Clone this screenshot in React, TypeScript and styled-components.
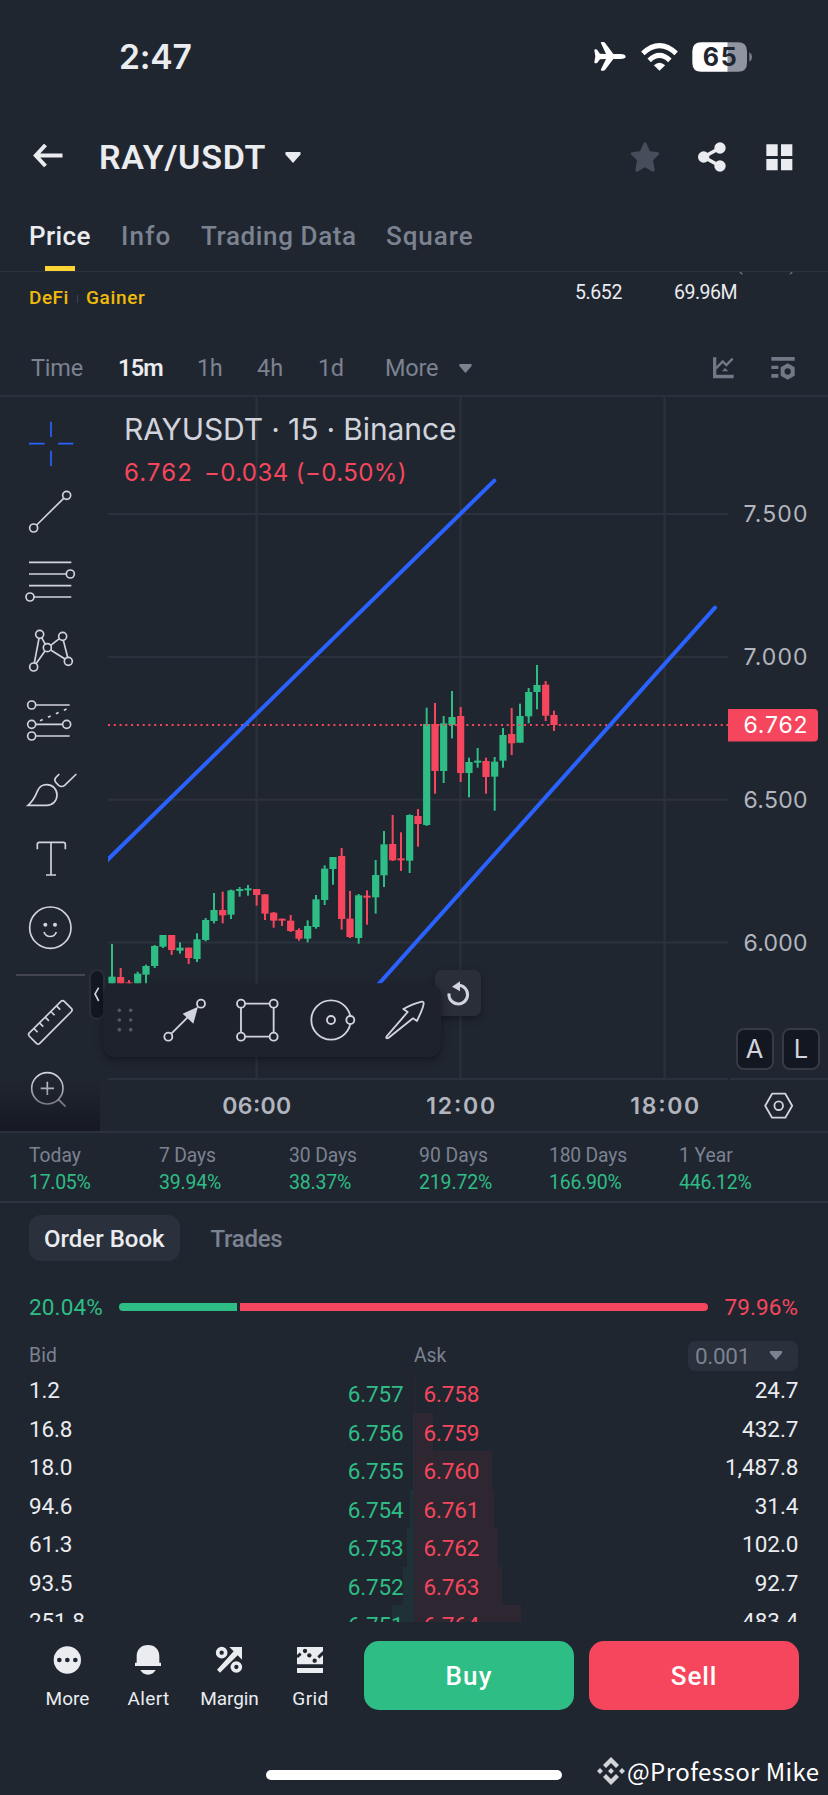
import React from "react";
import styled, { createGlobalStyle, css } from "styled-components";

const c = {
  bg: "#202630",
  line: "#2b313c",
  panel: "#2a303c",
  text: "#eaecef",
  muted: "#7b8290",
  green: "#2ebd85",
  red: "#f6465d",
  yellow: "#f0b90b",
  blue: "#2962ff",
  icon: "#d1d4dc",
  axis: "#b2b5be",
  deep: "#131722",
};

const GlobalStyle = createGlobalStyle`
  * { box-sizing: border-box; }
  body { margin: 0; background: ${c.bg}; }
`;

const Screen = styled.div`
  width: 828px;
  height: 1795px;
  overflow: hidden;
  position: relative;
  display: flex;
  flex-direction: column;
  background: ${c.bg};
  color: ${c.text};
  font-family: Roboto, sans-serif;
`;

/* Text run with its size, weight, tracking and tone */
const Txt = styled.span<{ $s: number; $w?: number; $ls?: number; $c?: string; $inter?: boolean }>`
  font-size: ${(p) => p.$s}px;
  font-weight: ${(p) => p.$w ?? 400};
  letter-spacing: ${(p) => p.$ls ?? 0}px;
  color: ${(p) => p.$c ?? c.text};
  line-height: 30px;
  white-space: pre;
  ${(p) => p.$inter && css`font-family: Inter, sans-serif;`}
`;

const StatusBar = styled.div`
  flex: none;
  height: 113px;
  padding: 0 75px 0 119px;
  display: flex;
  align-items: center;
  justify-content: space-between;
`;

const StatusIcons = styled.div`
  display: flex;
  align-items: center;
  gap: 14.5px;
`;

const Header = styled.div`
  flex: none;
  height: 88px;
  padding: 0 35px 0 32px;
  display: flex;
  align-items: center;
`;

const PairTitle = styled.div`
  display: flex;
  align-items: center;
  gap: 18.5px;
  margin-left: 35px;
`;

const HeaderActions = styled.div`
  margin-left: auto;
  display: flex;
  align-items: center;
  gap: 38px;
`;

const MainTabs = styled.div`
  flex: none;
  height: 71px;
  padding-left: 29px;
  display: flex;
  gap: 30px;
  border-bottom: 1px solid ${c.line};
`;

const MainTab = styled.div<{ $w: number }>`
  position: relative;
  width: ${(p) => p.$w}px;
  padding-top: 20px;
`;

const TabMark = styled.i`
  position: absolute;
  left: 16px;
  bottom: 0;
  width: 30px;
  height: 5px;
  background: #fcd535;
`;

const TickerStrip = styled.div`
  flex: none;
  height: 69px;
  overflow: hidden;
  display: flex;
  justify-content: space-between;
  padding: 0 33px 0 29px;
`;

const TagList = styled.div`
  display: flex;
  align-items: center;
  height: 30px;
  margin-top: 11px;
`;

const TagDivider = styled.i`
  width: 1px;
  height: 8px;
  margin: 2px 8px 0 8px;
  background: #3a414d;
`;

const VolumeCols = styled.div`
  display: flex;
  gap: 53px;
`;

const VolumeCol = styled.div<{ $w: number }>`
  display: flex;
  flex-direction: column;
  width: ${(p) => p.$w}px;
  margin-top: -22px;
  & > span:first-child { height: 28px; }
`;

const Timeframes = styled.div`
  flex: none;
  height: 56px;
  padding: 0 33px 0 31px;
  display: flex;
  align-items: center;
  border-bottom: 2px solid ${c.line};
`;

const Frame = styled.div<{ $w: number }>`
  width: ${(p) => p.$w}px;
`;

const FrameIcons = styled.div`
  margin-left: auto;
  display: flex;
  gap: 37px;
`;

const ChartArea = styled.div`
  flex: none;
  height: 736px;
  position: relative;
  display: flex;
  border-bottom: 2px solid ${c.line};
`;

const Rail = styled.div`
  flex: none;
  width: 100px;
  padding-top: 11.67px;
  position: relative;
  display: flex;
  flex-direction: column;
`;

const RailIcon = styled.svg`
  flex: none;
  width: 100px;
  height: 69.33px;
  fill: none;
  stroke: ${c.icon};
  stroke-width: 5;
`;

const RailLine = styled.i`
  flex: none;
  width: 69px;
  height: 2px;
  margin: 10.7px 0 11.6px 16px;
  background: #434651;
`;

const RailFade = styled.i`
  position: absolute;
  left: 0;
  right: 0;
  bottom: 0;
  height: 54px;
  background: linear-gradient(to bottom, rgba(19, 23, 34, 0), rgba(21, 24, 35, 0.95));
`;

const Canvas = styled.svg`
  flex: none;
  width: 728px;
  height: 734px;
  display: block;
  font-family: Inter, sans-serif;
`;

const Legend = styled.div`
  position: absolute;
  left: 124px;
  top: 17px;
  display: flex;
  flex-direction: column;
  gap: 12.5px;
`;

const LegendRow = styled.div`
  display: flex;
  gap: 11px;
  height: 31px;
`;

const CollapseTab = styled.div`
  position: absolute;
  left: 89px;
  top: 571.5px;
  width: 16px;
  height: 51px;
  border-radius: 8px;
  border: 2px solid #2a2e39;
  background: ${c.deep};
`;

const ResetButton = styled.div`
  position: absolute;
  left: 435px;
  top: 573px;
  width: 46px;
  height: 46px;
  border-radius: 7px;
  background: #2a2e39;
  box-shadow: 0 3px 7px rgba(0, 0, 0, 0.35);
`;

const FloatBar = styled.div`
  position: absolute;
  left: 103px;
  top: 586.5px;
  width: 338px;
  height: 73px;
  display: flex;
  border-radius: 12px;
  background: #1e222d;
  box-shadow: 0 3px 8px rgba(0, 0, 0, 0.4);
`;

const FloatIcon = styled.svg<{ $w?: number }>`
  flex: none;
  width: ${(p) => p.$w ?? 73.33}px;
  height: 73px;
  fill: none;
  stroke: ${c.icon};
  stroke-width: 5.5;
`;

const AxisKeys = styled.div`
  position: absolute;
  left: 735.5px;
  top: 630.5px;
  display: flex;
  gap: 8.5px;
`;

const AxisKey = styled.div`
  width: 38px;
  height: 42px;
  display: flex;
  align-items: center;
  justify-content: center;
  border: 2px solid #363a45;
  border-radius: 8px;
  background: ${c.deep};
`;

const Stats = styled.div`
  flex: none;
  height: 70px;
  padding: 8px 0 0 29px;
  display: grid;
  grid-template-columns: repeat(6, 130px);
  border-bottom: 2px solid #2e343f;
`;

const Stat = styled.div`
  display: flex;
  flex-direction: column;
  & > span { height: 26.6px; }
`;

const BookTabs = styled.div`
  flex: none;
  margin-top: 12px;
  padding-left: 29px;
  height: 46px;
  display: flex;
  align-items: center;
`;

const BookTab = styled.div<{ $on?: boolean }>`
  height: 46px;
  padding: 9px 15px 7px;
  margin-right: 16px;
  border-radius: 12px;
  background: ${(p) => (p.$on ? c.panel : "transparent")};
`;

const RatioRow = styled.div`
  flex: none;
  margin-top: 31px;
  height: 30px;
  padding: 0 30px 0 29px;
  display: flex;
  align-items: center;
`;

const RatioBar = styled.div`
  flex: none;
  width: 589px;
  margin: 0 16px 0 0;
  display: flex;
  gap: 3px;
`;

const RatioPart = styled.i<{ $share: number; $buy?: boolean }>`
  flex: ${(p) => p.$share} 0 0;
  height: 8px;
  background: ${(p) => (p.$buy ? c.green : c.red)};
  border-radius: ${(p) => (p.$buy ? "4px 0 0 4px" : "0 4px 4px 0")};
`;

const RatioLabel = styled.div<{ $w: number }>`
  width: ${(p) => p.$w}px;
`;

const BookHead = styled.div`
  flex: none;
  margin-top: 18px;
  height: 30px;
  padding: 0 30px 0 29px;
  display: grid;
  grid-template-columns: 385px 1fr 110px;
  align-items: center;
  & > span { padding-top: 1px; }
`;

const Precision = styled.div`
  height: 30px;
  padding: 0 15px 0 7px;
  display: flex;
  align-items: center;
  justify-content: space-between;
  border-radius: 7px;
  background: ${c.panel};
`;

const Book = styled.div`
  flex: none;
  margin-top: 4px;
  height: 248px;
  overflow: hidden;
`;

const BookRow = styled.div`
  height: 38.5px;
  display: grid;
  grid-template-columns: 414px 414px;
`;

const BookSide = styled.div<{ $ask?: boolean; $depth: number }>`
  display: flex;
  justify-content: space-between;
  padding: ${(p) => (p.$ask ? "0 29.5px 0 9.5px" : "0 10.5px 0 29px")};
  background: linear-gradient(${(p) => (p.$ask ? "#2e2731, #2e2731" : "#203037, #203037")}) no-repeat
    ${(p) => (p.$ask ? "left" : "right")} top / ${(p) => p.$depth}px 100%;
  & > span { padding-top: ${(p) => (p.$ask ? "5px" : "1px")}; }
  & > span + span { padding-top: ${(p) => (p.$ask ? "1px" : "5px")}; }
`;

const Footer = styled.div`
  flex: none;
  margin-top: 19px;
  height: 69px;
  padding: 0 29px 0 27px;
  display: flex;
`;

const NavItem = styled.div`
  width: 81px;
  display: flex;
  flex-direction: column;
  align-items: center;
  padding-top: 4px;
  gap: 9px;
`;

const NavIcon = styled.svg`
  flex: none;
  width: 30px;
  height: 30px;
  margin-right: 1.5px;
  fill: ${c.text};
`;

const TradeButton = styled.div<{ $sell?: boolean }>`
  width: 210px;
  height: 69px;
  margin-left: ${(p) => (p.$sell ? 15 : 13)}px;
  display: flex;
  align-items: center;
  justify-content: center;
  border-radius: 15px;
  background: ${(p) => (p.$sell ? c.red : c.green)};
`;

const BottomRow = styled.div`
  flex: none;
  height: 30px;
  margin-top: 46px;
  padding-left: 266px;
  display: flex;
  align-items: center;
`;

const HomeBar = styled.i`
  width: 296px;
  height: 10px;
  margin: 7px 35px 0 0;
  border-radius: 5px;
  background: #fff;
`;

const Credit = styled.span`
  font: 400 24px/30px "Noto Sans CJK SC", sans-serif;
  letter-spacing: 0.42px;
  color: #fff;
  white-space: pre;
  margin: -1px 0 0 2px;
`;

/* Candles: direction, high, body top, body bottom, low (thirds of a pixel below y = 780) */
type Candle = [0 | 1, number, number, number, number];
const candles: Candle[] = [
  [1, 492, 590, 640, 640], [0, 564, 591, 640, 640], [0, 600, 607, 640, 640], [1, 575, 581, 640, 640],
  [1, 554, 558, 584, 640], [1, 495, 498, 558, 564], [1, 465, 465, 500, 504], [0, 465, 465, 510, 525],
  [1, 487, 503, 512, 521], [0, 503, 503, 534, 552], [1, 460, 478, 537, 546], [1, 414, 420, 480, 484],
  [1, 339, 390, 423, 430], [0, 335, 390, 406, 430], [1, 329, 331, 404, 417], [1, 321, 327, 333, 350],
  [1, 315, 325, 331, 347], [0, 327, 327, 345, 377], [0, 343, 343, 401, 420], [0, 396, 398, 422, 443],
  [0, 416, 416, 422, 438], [0, 405, 422, 453, 456], [0, 445, 450, 476, 482], [1, 421, 438, 476, 487],
  [1, 345, 358, 441, 446], [1, 256, 266, 360, 375], [1, 231, 231, 267, 314], [0, 204, 228, 417, 449],
  [0, 333, 416, 471, 474], [1, 342, 346, 474, 491], [0, 331, 347, 353, 434], [1, 240, 285, 352, 401],
  [1, 153, 193, 286, 321], [0, 105, 192, 241, 243], [0, 157, 235, 241, 273], [1, 103, 105, 242, 279],
  [0, 87, 108, 132, 200], [1, -217, -168, 135, 138], [0, -231, -168, -27, 41], [1, -192, -170, -27, 9],
  [1, -267, -189, -165, -125], [0, -219, -192, -21, 6], [1, -67, -54, -21, 52], [1, -96, -58, -52, -37],
  [0, -67, -57, -9, 41], [1, -69, -55, -10, 92], [1, -156, -135, -58, -37], [0, -216, -138, -110, -75],
  [1, -229, -192, -112, -112], [1, -276, -264, -191, -170], [1, -345, -285, -264, -212],
  [0, -297, -286, -193, -177], [0, -208, -195, -165, -147],
];

const gridX = [256.5, 460.5, 664.5];
const timeLabels = ["06:00", "12:00", "18:00"];
const gridY: [number, string][] = [[514, "7.500"], [657, "7.000"], [799.7, "6.500"], [942.6, "6.000"]];

const yOf = (v: number) => 780 + v / 3;

function PriceChart() {
  return (
    <Canvas viewBox="100 397 728 734">
      <defs>
        <clipPath id="pane"><rect x="108" y="397" width="620" height="586.3" /></clipPath>
      </defs>
      <g stroke="#2c323d" strokeWidth="2">
        {gridX.map((x) => <line key={x} x1={x} x2={x} y1="397" y2="1078" />)}
        {gridY.map(([y]) => <line key={y} x1="108" x2="728" y1={y} y2={y} />)}
        <line x1="108" x2="728" y1="1079" y2="1079" />
        <line x1="730" x2="828" y1="1079" y2="1079" />
      </g>
      <g clipPath="url(#pane)">
        {candles.map(([up, hi, top, bottom, lo], i) => {
          const x = 112 + Math.round(i * 8.5 * 3) / 3;
          return (
            <g key={i} fill={up ? c.green : c.red}>
              <rect x={x - 1} width="2" y={yOf(hi)} height={(lo - hi) / 3} />
              <rect x={x - 3.6} width="7.2" y={yOf(top)} height={(bottom - top) / 3} />
            </g>
          );
        })}
        <line x1="108" x2="728" y1="725" y2="725" stroke={c.red} strokeWidth="2" strokeDasharray="2 3.78" />
        <g stroke={c.blue} strokeWidth="4" strokeLinecap="round">
          <line x1="105" y1="862.3" x2="494.3" y2="480.6" />
          <line x1="374.5" y1="988.7" x2="715" y2="607.6" />
        </g>
      </g>
      <g fill={c.axis} fontSize="23">
        {gridY.map(([y, label]) => (
          <text key={label} x="743.5" y={y + 8.3} textLength="64" lengthAdjust="spacing">{label}</text>
        ))}
        {gridX.map((x, i) => (
          <text key={x} x={x + 0.3} y="1114.3" fontWeight="600" textAnchor="middle" textLength="69">{timeLabels[i]}</text>
        ))}
      </g>
      <path d="M728 709h86a4 4 0 0 1 4 4v24.500a4 4 0 0 1-4 4h-86z" fill={c.red} />
      <text x="743.5" y="733.3" fontSize="23" fill="#fff" textLength="64">6.762</text>
      <g fill="none" stroke={c.icon} strokeWidth="1.8" strokeLinejoin="round">
        <path d="M765.200 1105.700l6.900-12h13.200l6.900 12-6.900 12h-13.200z" />
        <circle cx="778.7" cy="1105.700" r="4.300" />
      </g>
    </Canvas>
  );
}

const Dot = ({ x, y }: { x: number; y: number }) => <circle cx={x} cy={y} r="12" />;

function ToolRail() {
  const vb = "0 0 300 208";
  return (
    <Rail>
      <RailIcon viewBox={vb}>
        <path stroke={c.blue} d="M87 104h47M174 104h46M153 38v46M153 125v46" />
      </RailIcon>
      <RailIcon viewBox={vb}>
        <Dot x={200} y={52} /><Dot x={101} y={150} />
        <path d="M110 141L191 61" />
      </RailIcon>
      <RailIcon viewBox={vb}>
        <path d="M87 46h127M87 81h112M87 116h127M102 150h112" />
        <Dot x={211} y={81} /><Dot x={90} y={150} />
      </RailIcon>
      <RailIcon viewBox={vb}>
        <path d="M117 64L103 138M125 62L136 82M135 102L108 140M152 85L178 65M190 70L203 121M152 99L195 126" />
        <Dot x={119} y={52} /><Dot x={188} y={58} /><Dot x={142} y={92} /><Dot x={205} y={133} /><Dot x={101} y={150} />
      </RailIcon>
      <RailIcon viewBox={vb}>
        <path d="M107 57h102M107 115h81M107 150h102" />
        <path d="M120 104L200 69" strokeDasharray="9 17" />
        <Dot x={95} y={57} /><Dot x={95} y={115} /><Dot x={200} y={115} /><Dot x={95} y={150} />
      </RailIcon>
      <RailIcon viewBox={vb}>
        <path d="M84 151C100 138 107 122 113 107C118 95 128 89 140 89C158 89 171 103 171 120C171 138 158 151 140 151Z" />
        <path d="M178 57L170 65Q160 74 168 83L176 91Q185 98 194 91L229 57" />
      </RailIcon>
      <RailIcon viewBox={vb}>
        <path d="M112 73V58Q112 52 118 52H190Q196 52 196 58V73M153 52V150M138 150h30" />
      </RailIcon>
      <RailIcon viewBox={vb}>
        <circle cx="151" cy="101" r="62" />
        <g fill={c.icon} stroke="none"><circle cx="136" cy="92" r="6" /><circle cx="165" cy="92" r="6" /></g>
        <path d="M132 114C138 132 163 132 169 114" />
      </RailIcon>
      <RailLine />
      <RailIcon viewBox={vb}>
        <g transform="translate(151 103) rotate(-45)">
          <rect x="-74" y="-22" width="148" height="44" rx="7" />
          <path d="M-48-22v16M-24-22v16M0-22v16M24-22v16M48-22v16" />
        </g>
      </RailIcon>
      <RailIcon viewBox={vb}>
        <circle cx="142" cy="94" r="47" />
        <path d="M122 94h40M142 74v40M175 127L197 149" />
      </RailIcon>
      <RailFade />
    </Rail>
  );
}

function ShapeBar() {
  const vb = "0 0 220 219";
  return (
    <FloatBar>
      <FloatIcon $w={45} viewBox="0 0 135 219">
        <g fill="#555862" stroke="none">
          {[79, 108, 137].map((y) => [49, 83].map((x) => <circle key={`${x}-${y}`} cx={x} cy={y} r="5.500" />))}
        </g>
      </FloatIcon>
      <FloatIcon viewBox={vb}>
        <Dot x={159} y={59} /><Dot x={61} y={158} />
        <path d="M70 149L124 95" />
        <path d="M150 68L104 89L136 119Z" fill={c.icon} stroke="none" />
      </FloatIcon>
      <FloatIcon viewBox={vb}>
        <path d="M72 59h74M72 158h74M60 71v75M158 71v75" />
        <Dot x={60} y={59} /><Dot x={158} y={59} /><Dot x={60} y={158} /><Dot x={158} y={158} />
      </FloatIcon>
      <FloatIcon viewBox={vb}>
        <circle cx="108" cy="108" r="59" />
        <circle cx="166" cy="108" r="12" fill="#1e222d" />
        <Dot x={108} y={108} />
      </FloatIcon>
      <FloatIcon viewBox={vb} strokeLinejoin="round">
        <path d="M161 53C140 58 123 66 106 75L119 84L56 157Q52 165 61 162L135 103L147 111C154 94 167 72 167 58Q167 52 161 53Z" />
      </FloatIcon>
    </FloatBar>
  );
}

const Caret = ({ w, h, fill }: { w: number; h: number; fill: string }) => (
  <svg width={w} height={h} viewBox="0 0 16 11">
    <path d="M0.500 0H15.500V2.500L8 11L0.500 2.500Z" fill={fill} />
  </svg>
);

const bids: [string, string, number][] = [
  ["1.2", "6.757", 0], ["16.8", "6.756", 1], ["18.0", "6.755", 1], ["94.6", "6.754", 4],
  ["61.3", "6.753", 7], ["93.5", "6.752", 11], ["251.8", "6.751", 22],
];
const asks: [string, string, number][] = [
  ["6.758", "24.7", 1], ["6.759", "432.7", 19], ["6.760", "1,487.8", 78], ["6.761", "31.4", 80],
  ["6.762", "102.0", 84], ["6.763", "92.7", 88], ["6.764", "483.4", 107],
];
/* Period, its tracking, return, its tracking */
const stats: [string, number, string, number][] = [
  ["Today", 0, "17.05%", -0.3], ["7 Days", -0.15, "39.94%", -0.2], ["30 Days", -0.1, "38.37%", -0.2],
  ["90 Days", 0.05, "219.72%", -0.15], ["180 Days", -0.17, "166.90%", -0.25], ["1 Year", 0, "446.12%", -0.25],
];

export default function App() {
  return (
    <Screen>
      <GlobalStyle />
      <StatusBar>
        <Txt $s={33.7} $w={600} $ls={-0.25} $inter>2:47</Txt>
        <StatusIcons>
          <svg width="32" height="29" viewBox="0 0 96 87" fill="#fff">
            <path d="M1 25Q1 22 4 22H6Q8 22 10 24L18 35L36 36L21 4Q19 0 23 0H28Q31 0 33 2L58 36H80Q94 37 95 44Q94 50 80 51H58L33 84Q31 86 28 86H23Q19 86 21 82L36 51L18 52L10 62Q8 64 6 64H4Q1 64 1 61L4 43Z" />
          </svg>
          <svg width="37" height="28" viewBox="0 0 110 84">
            <g fill="none" stroke="#fff" strokeWidth="15">
              <path d="M5 31Q55 -15 105 31" />
              <path d="M24 52Q55 22 86 52" />
            </g>
            <path d="M38 67Q55 52 72 67L55 83Z" fill="#fff" />
          </svg>
          <svg width="61" height="30" viewBox="0 0 183 90" fontFamily="Inter, sans-serif">
            <path d="M107 1H138Q165 1 165 28V62Q165 89 138 89H107Z" fill="#9094a0" />
            <path d="M107 1H28Q1 1 1 28V62Q1 89 28 89H107Z" fill="#fff" />
            <path d="M172 31Q180 35 180 45Q180 55 172 59Z" fill="#7b808b" />
            <text x="83" y="72" textAnchor="middle" fontSize="75" fontWeight="700" textLength="102" fill={c.bg}>65</text>
          </svg>
        </StatusIcons>
      </StatusBar>

      <Header>
        <svg width="32" height="26" viewBox="0 0 32 26" fill="none" stroke={c.text} strokeWidth="4">
          <path d="M4 11.500H30.500M13.500 1L3.800 11.500L13.500 22" />
        </svg>
        <PairTitle>
          <Txt $s={34} $w={600} $ls={0.75}>RAY/USDT</Txt>
          <Caret w={16} h={11} fill={c.text} />
        </PairTitle>
        <HeaderActions>
          <svg width="30" height="30" viewBox="0 0 90 90" fill="#474d5b">
            <path d="M41 4Q45-2 49 4L60 28L84 31Q91 33 86 38L69 55L74 84Q74 91 68 89L45 76L22 89Q16 91 16 84L21 55L4 38Q-1 33 6 31L30 28Z" />
          </svg>
          <svg width="30" height="30" viewBox="0 0 90 90" fill={c.text}>
            <circle cx="66" cy="18" r="17" /><circle cx="17" cy="45" r="17" /><circle cx="66" cy="72" r="17" />
            <path d="M66 18L17 45L66 72" fill="none" stroke={c.text} strokeWidth="11" />
          </svg>
          <svg width="27" height="27" viewBox="0 0 81 81" fill={c.text}>
            <path d="M1 1h34v35H1zM45 1h34v35H45zM1 45h34v34H1zM45 45h34v34H45z" />
          </svg>
        </HeaderActions>
      </Header>

      <MainTabs>
        <MainTab $w={62}><Txt $s={26} $w={500} $ls={0.4}>Price</Txt><TabMark /></MainTab>
        <MainTab $w={50}><Txt $s={26} $w={500} $ls={1.2} $c={c.muted}>Info</Txt></MainTab>
        <MainTab $w={155}><Txt $s={26} $w={500} $ls={0.62} $c={c.muted}>Trading Data</Txt></MainTab>
        <MainTab $w={90}><Txt $s={26} $w={500} $ls={0.95} $c={c.muted}>Square</Txt></MainTab>
      </MainTabs>

      <TickerStrip>
        <TagList>
          <Txt $s={19} $w={500} $ls={0.5} $c={c.yellow}>DeFi</Txt>
          <TagDivider />
          <Txt $s={19} $w={500} $ls={0.68} $c={c.yellow}>Gainer</Txt>
        </TagList>
        <VolumeCols>
          <VolumeCol $w={46}>
            <Txt $s={17} $c={c.muted}> </Txt>
            <Txt $s={19.500} $ls={-0.4}>5.652</Txt>
          </VolumeCol>
          <VolumeCol $w={121}>
            <Txt $s={17} $ls={0.85} $c={c.muted}>24h Vol(USDT)</Txt>
            <Txt $s={19.500} $ls={-0.5}>69.96M</Txt>
          </VolumeCol>
        </VolumeCols>
      </TickerStrip>

      <Timeframes>
        <Frame $w={87}><Txt $s={23.500} $ls={-0.2} $c={c.muted}>Time</Txt></Frame>
        <Frame $w={79}><Txt $s={23.500} $w={600} $ls={-0.8}>15m</Txt></Frame>
        <Frame $w={60}><Txt $s={23.500} $ls={-0.5} $c={c.muted}>1h</Txt></Frame>
        <Frame $w={61}><Txt $s={23.500} $c={c.muted}>4h</Txt></Frame>
        <Frame $w={67}><Txt $s={23.500} $ls={-0.5} $c={c.muted}>1d</Txt></Frame>
        <Frame $w={74}><Txt $s={23.500} $ls={-0.25} $c={c.muted}>More</Txt></Frame>
        <Caret w={13} h={9} fill={c.muted} />
        <FrameIcons>
          <svg width="21" height="23" viewBox="0 0 63 69" fill="#717987">
            <path d="M0 1H10V53H62V64H0Z" />
            <path d="M9 34L29 13L40 24L59 5" fill="none" stroke="#717987" strokeWidth="7" />
            <path d="M27 43L36 33L46 43Z" />
          </svg>
          <svg width="24" height="23" viewBox="0 0 72 69" fill="#717987">
            <path d="M1 0H71V11H1zM1 26H22V36H1zM1 51H22V62H1z" />
            <path fillRule="evenodd" d="M50 19L71 31V56L50 68L29 56V31ZM50 34A9.500 9.500 0 1 0 50 53A9.500 9.500 0 1 0 50 34Z" />
          </svg>
        </FrameIcons>
      </Timeframes>

      <ChartArea>
        <ToolRail />
        <PriceChart />
        <Legend>
          <LegendRow><Txt $s={30} $inter $ls={-0.13} $c={c.icon}>RAYUSDT · 15 · Binance</Txt></LegendRow>
          <LegendRow>
            <Txt $s={24} $inter $ls={1.1} $c={c.red}>6.762</Txt>
            <Txt $s={24} $inter $ls={0.42} $c={c.red}>−0.034 (−0.50%)</Txt>
          </LegendRow>
        </Legend>
        <CollapseTab>
          <svg width="12" height="46" viewBox="0 0 36 138" fill="none" stroke={c.icon} strokeWidth="5">
            <path d="M23 50L12 69L23 90" />
          </svg>
        </CollapseTab>
        <ResetButton>
          <svg width="46" height="46" viewBox="0 0 138 138">
            <path d="M42 70A28 28 0 1 0 73 46" fill="none" stroke={c.icon} strokeWidth="9" />
            <path d="M51 50L75 34V64Z" fill={c.icon} />
          </svg>
        </ResetButton>
        <ShapeBar />
        <AxisKeys>
          <AxisKey><Txt $s={25.500} $inter $c={c.icon}>A</Txt></AxisKey>
          <AxisKey><Txt $s={25.500} $inter $c={c.icon}>L</Txt></AxisKey>
        </AxisKeys>
      </ChartArea>

      <Stats>
        {stats.map(([label, labelLs, value, valueLs]) => (
          <Stat key={label}>
            <Txt $s={19.300} $ls={labelLs} $c={c.muted}>{label}</Txt>
            <Txt $s={19.500} $ls={valueLs} $c={c.green}>{value}</Txt>
          </Stat>
        ))}
      </Stats>

      <BookTabs>
        <BookTab $on><Txt $s={24} $w={500}>Order Book</Txt></BookTab>
        <BookTab><Txt $s={24} $w={500} $ls={-0.3} $c={c.muted}>Trades</Txt></BookTab>
      </BookTabs>

      <RatioRow>
        <RatioLabel $w={90.5}><Txt $s={22.500} $ls={0.15} $c={c.green}>20.04%</Txt></RatioLabel>
        <RatioBar><RatioPart $buy $share={20.04} /><RatioPart $share={79.960} /></RatioBar>
        <Txt $s={22.500} $ls={0.1} $c={c.red}>79.96%</Txt>
      </RatioRow>

      <BookHead>
        <Txt $s={19.300} $ls={0.2} $c={c.muted}>Bid</Txt>
        <Txt $s={19.300} $c={c.muted}>Ask</Txt>
        <Precision>
          <Txt $s={22.500} $ls={-0.3} $c={c.muted}>0.001</Txt>
          <Caret w={14} h={9} fill={c.muted} />
        </Precision>
      </BookHead>

      <Book>
        {bids.map(([amount, price, depth], i) => (
          <BookRow key={price}>
            <BookSide $depth={depth}>
              <Txt $s={22.500} $ls={-0.15}>{amount}</Txt>
              <Txt $s={22.500} $ls={-0.15} $c={c.green}>{price}</Txt>
            </BookSide>
            <BookSide $ask $depth={asks[i][2]}>
              <Txt $s={22.500} $ls={-0.15} $c={c.red}>{asks[i][0]}</Txt>
              <Txt $s={22.500}>{asks[i][1]}</Txt>
            </BookSide>
          </BookRow>
        ))}
      </Book>

      <Footer>
        <NavItem>
          <NavIcon viewBox="0 0 90 90">
            <circle cx="46" cy="45" r="41" />
            <g fill={c.bg}><circle cx="22" cy="45" r="7" /><circle cx="46" cy="45" r="7" /><circle cx="70" cy="45" r="7" /></g>
          </NavIcon>
          <Txt $s={19}>More</Txt>
        </NavItem>
        <NavItem>
          <NavIcon viewBox="0 0 90 90">
            <path d="M6 63V53H11V34C11 14 24 0 45 0S79 14 79 34V53H84V63ZM22 75H68Q60 89 45 89T22 75Z" />
          </NavIcon>
          <Txt $s={19} $ls={0.4}>Alert</Txt>
        </NavItem>
        <NavItem>
          <NavIcon viewBox="0 0 90 90">
            <path d="M46 6H84V44L71 31L18 83L9 74L59 19Z" />
            <g fill="none" stroke={c.text} strokeWidth="11"><circle cx="23" cy="23" r="12" /><circle cx="67" cy="66" r="12" /></g>
          </NavIcon>
          <Txt $s={19} $ls={-0.08}>Margin</Txt>
        </NavItem>
        <NavItem>
          <NavIcon viewBox="0 0 90 90">
            <path d="M6 6H84V58H6ZM6 69H84V84H6Z" />
            <path d="M6 36L17 26" stroke={c.bg} strokeWidth="9" />
            <path d="M70 37L86 22" stroke={c.bg} strokeWidth="9" />
            <g fill={c.bg}><circle cx="30" cy="18" r="6.500" /><circle cx="43" cy="31" r="6.500" /><circle cx="59" cy="47" r="6.500" /></g>
          </NavIcon>
          <Txt $s={19} $ls={0.4}>Grid</Txt>
        </NavItem>
        <TradeButton><Txt $s={26} $w={500} $ls={1.2} $c="#fff">Buy</Txt></TradeButton>
        <TradeButton $sell><Txt $s={26} $w={500} $ls={0.9} $c="#fff">Sell</Txt></TradeButton>
      </Footer>

      <BottomRow>
        <HomeBar />
        <svg width="28" height="28" viewBox="0 0 84 84" fill="#d3d5d8">
          <path d="M42 0L66 24L57 33L42 18L27 33L18 24ZM42 84L66 60L57 51L42 66L27 51L18 60ZM9 33L18 42L9 51L0 42ZM75 33L84 42L75 51L66 42ZM42 33L51 42L42 51L33 42Z" />
        </svg>
        <Credit>@Professor Mike</Credit>
      </BottomRow>
    </Screen>
  );
}
